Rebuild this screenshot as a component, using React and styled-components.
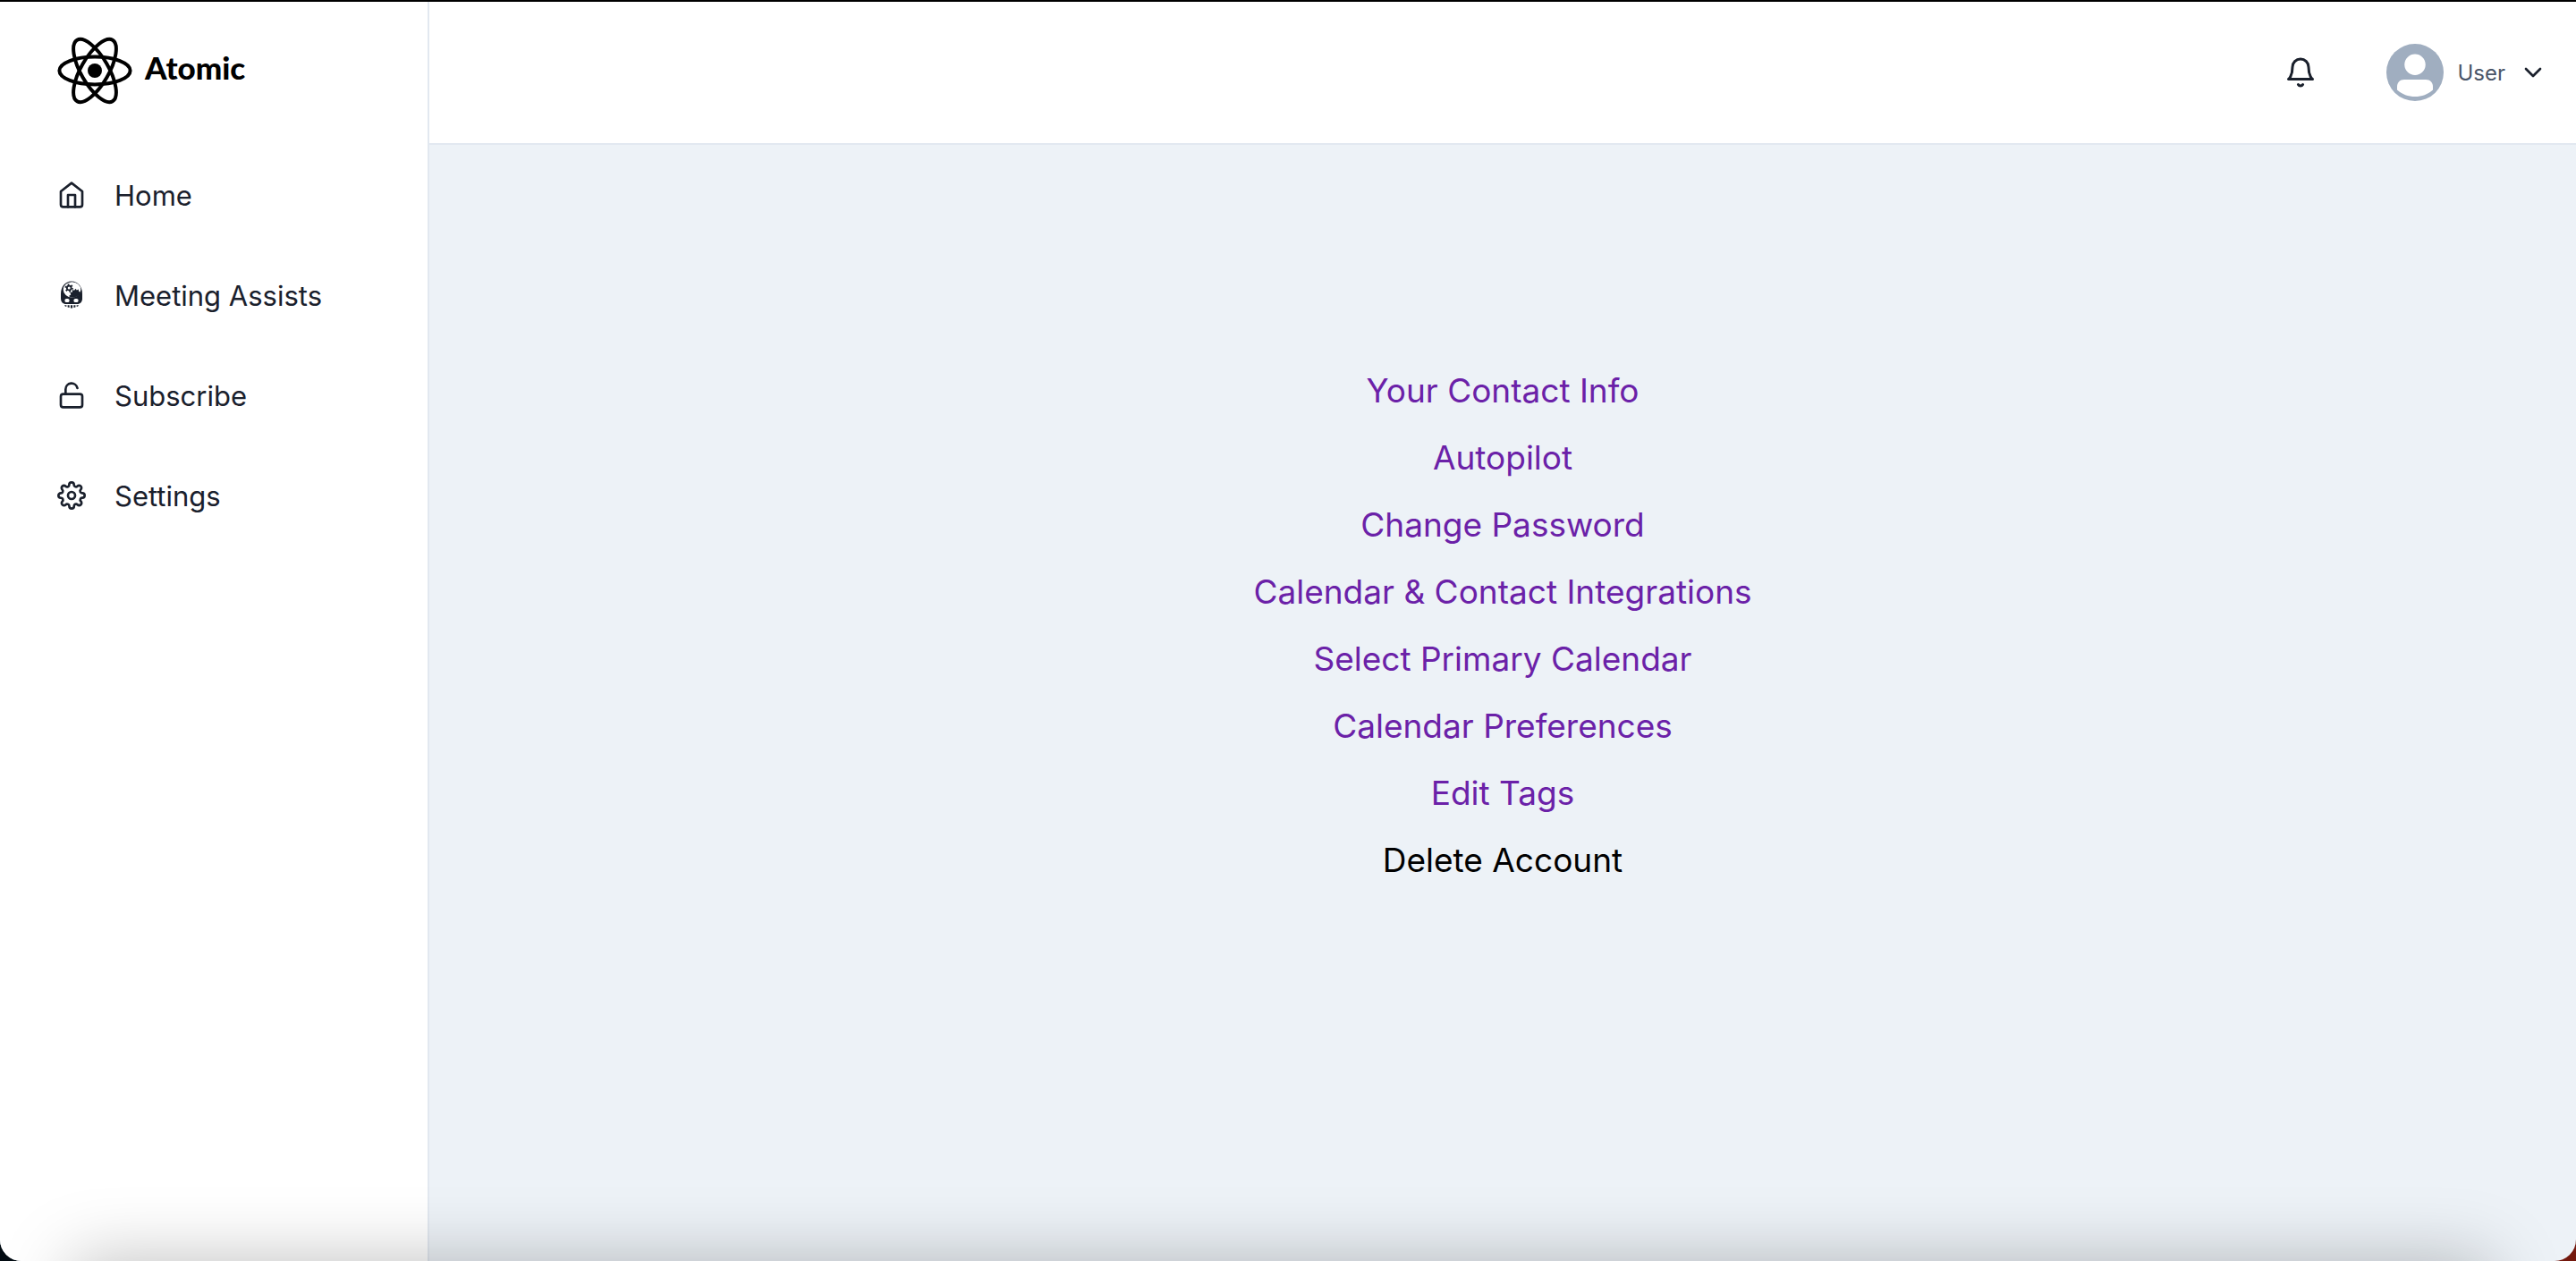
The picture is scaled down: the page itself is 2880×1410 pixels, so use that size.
import styled, { createGlobalStyle } from "styled-components";
import { FiBell, FiChevronDown, FiHome, FiSettings, FiUnlock } from "react-icons/fi";

const GlobalStyle = createGlobalStyle`
  * {
    box-sizing: border-box;
  }
  body {
    margin: 0;
    background: linear-gradient(to right, #020b12 50%, #74190e 50%);
    font-family: Inter, "Liberation Sans", sans-serif;
    color: #1a202c;
  }
`;

const AtomIcon = () => (
  <svg width="84" height="76" viewBox="-42 -38 84 76" fill="none" stroke="#000" strokeWidth="4">
    <ellipse rx="39.6" ry="15.4" />
    <ellipse rx="39.6" ry="15.4" transform="rotate(60)" />
    <ellipse rx="39.6" ry="15.4" transform="rotate(-60)" />
    <circle r="8" fill="#000" stroke="none" />
  </svg>
);

const AssistantIcon = () => (
  <svg width="32" height="32" viewBox="0 0 32 32" fill="currentColor">
    <path d="M16 .5C8.500.5 4 7 4 14.500v5C4 23.500 6 26 10 26h12c4 0 6-2.500 6-6.500v-5C28 7 23.500.5 16 .5z" />
    <ellipse cx="16.500" cy="9.800" rx="9.800" ry="8.600" fill="#fff" />
    <circle cx="13.200" cy="8" r="2.400" fill="none" stroke="currentColor" strokeWidth="1.800" />
    <circle cx="13.200" cy="8" r="3.900" fill="none" stroke="currentColor" strokeWidth="1.600" strokeDasharray="1.800 2.280" />
    <path d="M14.500 13l2.500-.5-.3-2.500 2.300.8 1.500-2 1.300 1.800 2-1 .3 2.400 2 .6c-1 3.500-3.500 5.400-7.600 5.900-2.500 0-4.500-.5-5.500-1.500l2.200-1.500z" />
    <rect x="8.500" y="20" width="5" height="4" rx="1.600" fill="#fff" />
    <rect x="18.500" y="20" width="5" height="4" rx="1.600" fill="#fff" />
    <path d="M8 27.200h2.400v1.500H9zM11.600 27.200h2v2.800l-2-.6zM14.900 27.200h2.200v3.300h-2.200zM18.400 27.200h2v2.200l-2 .6zM21.600 27.200H24l-1 1.500h-1.400z" />
  </svg>
);

const Avatar = () => (
  <svg width="64" height="64" viewBox="0 0 64 64">
    <circle cx="32" cy="32" r="32" fill="#a0aec0" />
    <circle cx="32" cy="23.300" r="11.700" fill="#fff" />
    <path d="M20 40h24c5 0 8 3.500 8 8v3.500C46.500 56.500 39.500 59 32 59s-14.500-2.500-20-7.500V48c0-4.500 3-8 8-8z" fill="#fff" />
  </svg>
);

const menus = [
  { title: "Home", icon: <FiHome size={32} /> },
  { title: "Meeting Assists", icon: <AssistantIcon /> },
  { title: "Subscribe", icon: <FiUnlock size={32} /> },
  { title: "Settings", icon: <FiSettings size={32} /> },
];

const settings = [
  "Your Contact Info",
  "Autopilot",
  "Change Password",
  "Calendar & Contact Integrations",
  "Select Primary Calendar",
  "Calendar Preferences",
  "Edit Tags",
];

const Sidebar = () => (
  <Side>
    <Logo href="#">
      <AtomIcon />
      <span>Atomic</span>
    </Logo>
    <nav>
      <Menu>
        {menus.map(({ title, icon }) => (
          <li key={title}>
            <MenuLink href="#">
              {icon}
              {title}
            </MenuLink>
          </li>
        ))}
      </Menu>
    </nav>
  </Side>
);

const Header = () => (
  <Top>
    <IconButton aria-label="Notifications">
      <FiBell size={36} />
    </IconButton>
    <UserButton>
      <Avatar />
      <span>User</span>
      <FiChevronDown size={32} />
    </UserButton>
  </Top>
);

const App = () => {
  return (
    <>
      <GlobalStyle />
      <Frame>
        <Sidebar />
        <Content>
          <Header />
          <Main>
            {settings.map((title) => (
              <SettingLink href="#" key={title}>
                {title}
              </SettingLink>
            ))}
            <DeleteButton>Delete Account</DeleteButton>
          </Main>
        </Content>
        <Shade />
      </Frame>
    </>
  );
};

const Frame = styled.div`
  display: flex;
  position: relative;
  overflow: hidden;
  min-height: 100vh;
  border-top: 2px solid #000;
  border-radius: 0 0 24px 24px;
  background-color: #edf2f7;
`;
const Side = styled.aside`
  flex: 0 0 480px;
  background-color: white;
  border-right: 2px solid #e2e8f0;
`;
const Logo = styled.a`
  display: flex;
  align-items: center;
  gap: 14px;
  height: 154px;
  padding: 0 64px;
  color: #000;
  font-family: Lato, sans-serif;
  font-size: 35px;
  font-weight: 900;
  text-decoration: none;
  span {
    padding-bottom: 8px;
  }
`;
const Menu = styled.ul`
  display: flex;
  flex-direction: column;
  gap: 64px;
  margin: 0;
  padding: 38px 64px;
  list-style: none;
`;
const MenuLink = styled.a`
  display: flex;
  align-items: center;
  gap: 32px;
  height: 48px;
  color: inherit;
  font-size: 31px;
  text-decoration: none;
`;
const Content = styled.div`
  flex: 1;
  min-width: 0;
`;
const Top = styled.header`
  display: flex;
  align-items: center;
  justify-content: flex-end;
  gap: 78px;
  height: 160px;
  padding-right: 32px;
  background-color: white;
  border-bottom: 2px solid #e2e8f0;
`;
const IconButton = styled.button`
  display: flex;
  align-items: center;
  padding: 0;
  border: none;
  background: none;
  color: inherit;
  font: inherit;
  cursor: pointer;
`;
const UserButton = styled(IconButton)`
  gap: 15px;
  font-size: 24px;
  span {
    color: #4a5568;
  }
`;
const Main = styled.main`
  display: flex;
  flex-direction: column;
  align-items: center;
  gap: 31px;
  padding: 253px 32px;
`;
const SettingLink = styled.a`
  color: #6b21a8;
  font-size: 37px;
  line-height: 44px;
  text-decoration: none;
`;
const DeleteButton = styled.button`
  padding: 0;
  border: none;
  background: none;
  color: #000;
  font-family: inherit;
  font-size: 37px;
  line-height: 44px;
  cursor: pointer;
`;
// soft shadow that rises from below the window's bottom edge
const Shade = styled.div`
  position: absolute;
  top: 100%;
  left: 80px;
  right: 96px;
  height: 160px;
  box-shadow: 0 0 80px rgba(0, 0, 0, 0.26);
  pointer-events: none;
`;

export default App;
